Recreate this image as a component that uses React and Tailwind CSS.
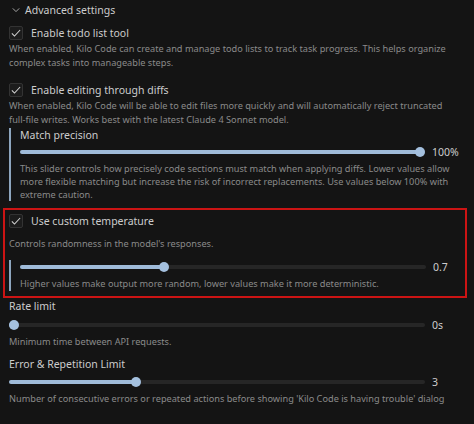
import React from 'react'

function Check() {
  return (
    <span className="w-[14px] h-[14px] shrink-0 flex items-center justify-center bg-[#1c1c1c] border border-[#333] rounded-[2px]">
      <svg width="12" height="12" viewBox="0 0 16 16" fill="none" stroke="#d4d4d4" strokeWidth="1.4">
        <path d="M2.5 8.5l3.5 3.5 7.5-8" />
      </svg>
    </span>
  )
}

function Slider({ pct, value }) {
  return (
    <div className="flex items-center h-[14px]">
      <div className="relative flex-1 h-[4px] rounded-full bg-[#262626]">
        <div
          className="absolute left-0 top-0 h-full rounded-full bg-[#9fbbd9]"
          style={{ width: `calc(5px + (100% - 10px) * ${pct / 100})` }}
        />
        <div
          className="absolute top-1/2 w-[10px] h-[10px] -mt-[5px] rounded-full bg-[#a4c0de]"
          style={{ left: `calc((100% - 10px) * ${pct / 100})` }}
        />
      </div>
      <span className="w-[37px] pl-[7px] text-[10.5px] leading-[14px] text-[#cccccc]">{value}</span>
    </div>
  )
}

const label = 'text-[10.5px] leading-[14px] text-[#cccccc]'
const desc = 'text-[9.2px] leading-[14px] text-[#8a8a8a]'

export default function App() {
  return (
    <div className="w-[474px] h-[424px] bg-[#141414] overflow-hidden" style={{ fontFamily: '"Noto Sans", sans-serif' }}>
      <div className={'flex items-center gap-[5px] pl-[12px] h-[20px] ' + label}>
        <svg width="8" height="8" viewBox="0 0 10 10" fill="none" stroke="#bbb" strokeWidth="1.1">
          <path d="M1 3l4 4 4-4" />
        </svg>
        <span>Advanced settings</span>
      </div>

      <div className="pl-[9px] pr-[12px]">
        <div className={'flex items-center gap-[8px] mt-[6px] h-[14px] ' + label}>
          <Check />
          <span>Enable todo list tool</span>
        </div>
        <p className={'mt-[2px] ' + desc}>
          When enabled, Kilo Code can create and manage todo lists to track task progress. This helps organize complex tasks into manageable steps.
        </p>

        <div className={'flex items-center gap-[8px] mt-[13px] h-[14px] ' + label}>
          <Check />
          <span>Enable editing through diffs</span>
        </div>
        <p className={'mt-[2px] pr-[10px] ' + desc}>
          When enabled, Kilo Code will be able to edit files more quickly and will automatically reject truncated full-file writes. Works best with the latest Claude 4 Sonnet model.
        </p>

        <div className="mt-[1px] border-l-2 border-[#8ea6bf] pl-[9px]">
          <div className={label}>Match precision</div>
          <div className="mt-[3px]"><Slider pct={100} value="100%" /></div>
          <p className="mt-[3px] text-[9.2px] leading-[13px] text-[#8a8a8a] pr-[4px]">
            This slider controls how precisely code sections must match when applying diffs. Lower values allow more flexible matching but increase the risk of incorrect replacements. Use values below 100% with extreme caution.
          </p>
        </div>
      </div>

      <div className="ml-[3px] mt-[7px] w-[464px] border-2 border-[#cc1414] pl-[4px] pr-[2px] pt-[4px] pb-[5px]">
        <div className={'flex items-center gap-[8px] h-[14px] ' + label}>
          <Check />
          <span>Use custom temperature</span>
        </div>
        <p className={'mt-[9px] ' + desc}>Controls randomness in the model's responses.</p>
        <div className="mt-[9px] border-l-2 border-[#8ea6bf] pl-[9px]">
          <Slider pct={35} value="0.7" />
          <p className={'mt-[3px] ' + desc}>Higher values make output more random, lower values make it more deterministic.</p>
        </div>
      </div>

      <div className="pl-[9px] pr-[12px]">
        <div className={'mt-[1px] ' + label}>Rate limit</div>
        <div className="mt-[5px]"><Slider pct={0} value="0s" /></div>
        <p className={'mt-[3px] ' + desc}>Minimum time between API requests.</p>
        <div className={'mt-[8px] ' + label}>Error &amp; Repetition Limit</div>
        <div className="mt-[4px]"><Slider pct={30} value="3" /></div>
        <p className={'mt-[3px] ' + desc}>Number of consecutive errors or repeated actions before showing 'Kilo Code is having trouble' dialog</p>
      </div>
    </div>
  )
}
